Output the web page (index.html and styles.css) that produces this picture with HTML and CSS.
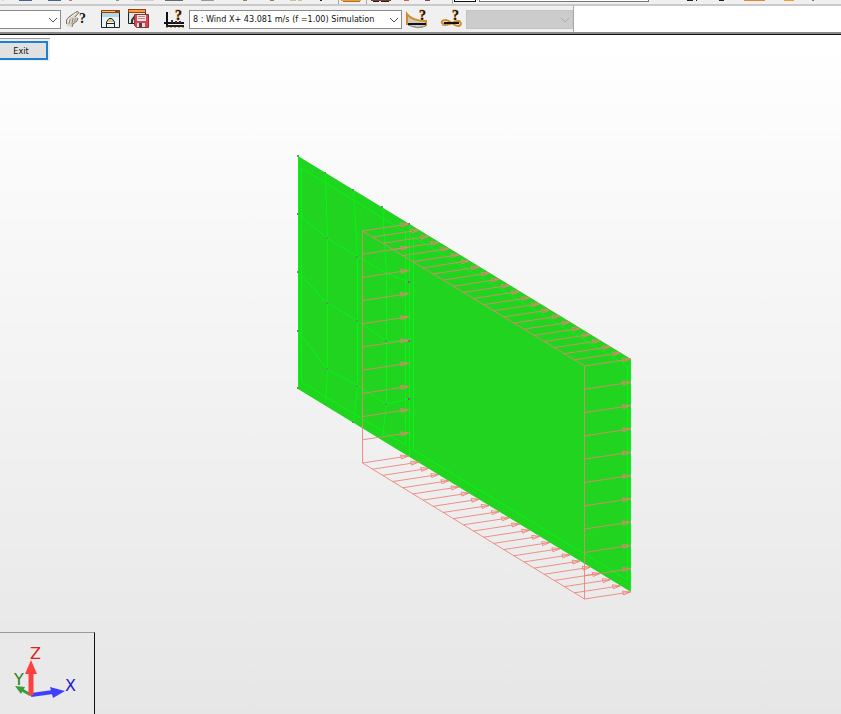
FILE: index.html
```html
<!DOCTYPE html>
<html lang="en">
<head>
    <meta charset="UTF-8">
    <meta name="viewport" content="width=device-width, initial-scale=1.0">
    <title>Wind load simulation</title>
    <link rel="stylesheet" href="styles.css">
</head>
<body>
    <!-- Lower edge of the upper toolbar -->
    <div class="top_strip">
        <svg width="841" height="4" viewBox="0 0 841 4" shape-rendering="crispEdges">
            <path fill="#f3c9cc" d="M2 0h2v1h-2z"/>
            <path fill="#456789" d="M19 0h13v1h-13zM48 0h13v1h-13z"/>
            <path fill="#b98088" d="M69 0h3v1h-3zM116 0h3v1h-3z"/>
            <path fill="#cfcfcf" d="M134 0h20v1h-20z"/>
            <path fill="#666b66" d="M165 0h18v1h-18z"/>
            <path fill="#9a9a9a" d="M201 0h13v1h-13z"/>
            <path fill="#a08050" d="M243 0h4v1h-4zM270 0h4v1h-4z"/>
            <path fill="#cfc58a" d="M290 0h6v1h-6zM298 0h4v1h-4z"/>
            <path fill="#222" d="M320 0h2v1h-2z"/>
            <path fill="#a9a9a9" d="M338 0h1v4h-1zM366 0h1v4h-1zM452 0h1v4h-1z"/>
            <path fill="#f0a030" d="M341 0h20v1h-20z"/>
            <path fill="#a87030" d="M343 1h17v1h-17z"/>
            <path fill="#803828" d="M371 0h20v1h-20z"/>
            <path fill="#222" d="M373 1h6v1h-6zM381 1h8v1h-8z"/>
            <path fill="#e85050" d="M404 0h5v1h-5z"/>
            <path fill="#8c4444" d="M425 0h5v1h-5z"/>
            <path fill="#fff" d="M455 0h20v1h-20zM480 0h168v2h-168z"/>
            <path fill="#111" d="M454 0h1v2h-1zM475 0h1v2h-1zM454 1h22v1h-22z"/>
            <path fill="#777" d="M479 0h1v2h-1zM648 0h1v2h-1zM479 1h170v1h-170z"/>
            <path fill="#222" d="M687 0h6v1h-6zM696 0h1v1h-1zM719 0h5v1h-5z"/>
            <path fill="#e08838" d="M744 0h21v1h-21z"/>
            <path fill="#ff9928" d="M784 0h10v1h-10z"/>
            <path fill="#777" d="M812 0h2v1h-2z"/>
        </svg>
    </div>

    <!-- Case toolbar -->
    <div class="toolbar">
        <span class="combo combo_small">
            <select aria-label="Selection"><option></option></select>
            <svg class="arrow" viewBox="0 0 10 6"><path d="M1 1l4 4 4-4"/></svg>
        </span>
        <button class="tool" aria-label="Pick query">
            <svg width="22" height="20" viewBox="0 0 22 20">
                <path fill="#d9d3c2" d="M2 17L1 12 3 8 8 4 12 2 14 3 10 8 13 8 12 12 8 15 7 18z"/>
                <path fill="none" stroke="#77736a" d="M1.500 15V11L4 8L12 2.500L14 3.500L10 8M13 9L12 12L8 15L7 18"/>
                <path fill="none" stroke="#8f8a80" d="M4 15L5 10M7 15L8 9M9 13L11 9"/>
                <path fill="none" stroke="#fff" d="M3 13L4 9M6 8L11 4"/>
                <text class="mark" x="14" y="14">?</text>
            </svg>
        </button>
        <i class="space"></i>
        <button class="tool" aria-label="Window">
            <svg width="22" height="20" viewBox="0 0 22 20">
                <path fill="#e9f4f8" stroke="#222" d="M2.500 2.500h18v16h-18z"/>
                <path fill="#8c4414" d="M2 1h19v3h-19z"/>
                <path fill="#ffb468" d="M3 2h13v1h-13z"/>
                <path fill="#b0d8e6" d="M3 4h17v4h-17z"/>
                <path fill="#e8bf75" d="M11.500 9l4 4h-8z"/>
                <path fill="none" stroke="#222" d="M7.500 18V13L10 9.500H13L15.500 13V18M7 14.500H16"/>
            </svg>
        </button>
        <button class="tool tool_wide" aria-label="Save view">
            <svg width="26" height="20" viewBox="0 0 26 20">
                <path fill="#d5e8ef" stroke="#222" d="M3.500 1.500h17v13h-17z"/>
                <path fill="#8c4414" d="M3 0h18v4h-18z"/>
                <path fill="#ff9d3c" d="M4 1h16v2h-16z"/>
                <path fill="none" stroke="#333" stroke-width="2" d="M7 14V11L10 7"/>
                <path fill="#d9434b" stroke="#943038" d="M9.500 5.500h14v13h-12l-2-2z"/>
                <path fill="#f4e9ea" d="M12 6h9v6h-9z"/>
                <path fill="#bd8588" d="M13 7h7v1h-7zM13 9h7v1h-7z"/>
                <path fill="#ddd" d="M12 14h8v4h-8z"/>
                <path fill="#444" d="M14 14h3v4h-3z"/>
            </svg>
        </button>
        <i class="space"></i>
        <button class="tool" aria-label="Load query">
            <svg width="22" height="20" viewBox="0 0 22 20">
                <path fill="none" stroke="#111" stroke-width="2" d="M4 3V17M1 14H21"/>
                <path fill="none" stroke="#222" stroke-width="2" d="M3 17H21"/>
                <path fill="none" stroke="#333" stroke-width="2" d="M9 14V11M13 14V12M17 14V12"/>
                <path fill="none" stroke="#d49a50" stroke-dasharray="2 2" d="M3 18.500H21"/>
                <text class="mark mark_glow" x="12" y="11">?</text>
            </svg>
        </button>
        <span class="combo combo_case">
            <select aria-label="Load case"><option>8 : Wind X+ 43.081 m/s (f =1.00) Simulation</option></select>
            <svg class="arrow" viewBox="0 0 10 6"><path d="M1 1l4 4 4-4"/></svg>
        </span>
        <button class="tool" aria-label="Diagram query">
            <svg width="22" height="20" viewBox="0 0 22 20">
                <path fill="#cfcac0" d="M1 5Q7 12 20 13L20 17Q10 19 2 15z"/>
                <path fill="none" stroke="#d08c28" stroke-width="2" d="M1 16V5Q6 12 20 12V17"/>
                <path fill="none" stroke="#888" d="M2 16Q12 20 20 17M5 17Q12 20 17 18"/>
                <path fill="none" stroke="#111" stroke-width="2" d="M2 15H20"/>
                <text class="mark mark_glow" x="13" y="11">?</text>
            </svg>
        </button>
        <i class="space"></i>
        <button class="tool" aria-label="Deformation query">
            <svg width="22" height="20" viewBox="0 0 22 20">
                <path fill="none" stroke="#888" d="M2 16C10 18 13 10 20 12"/>
                <path fill="none" stroke="#d08c28" stroke-width="2" d="M5 15C0 15 1 11 6 11C12 12 14 18 19 17C22 16 21 12 18 12C13 12 11 17 5 15"/>
                <path fill="none" stroke="#111" stroke-width="2" d="M4 14H19"/>
                <text class="mark mark_glow" x="12" y="11">?</text>
            </svg>
        </button>
        <span class="combo combo_off">
            <select aria-label="Component" disabled><option></option></select>
            <svg class="arrow" viewBox="0 0 10 6"><path d="M1 1l4 4 4-4"/></svg>
        </span>
        <div class="toolbar_rest"></div>
    </div>

    <!-- Model view -->
    <div class="view">
        <svg class="model" viewBox="0 35 841 679" preserveAspectRatio="xMidYMid meet">
            <polygon fill="#20d420" points="298,156 631,359 631,592 298,389"/>
            <g class="mesh">
                <path d="M298.500 157V388M409.500 224V457M630.500 360V591"/>
                <path d="M301.500 168V382L405.500 445V232Z"/>
                <path d="M413.500 237V450L627.500 580V366Z"/>
                <path d="M325.500 173L327.500 239V369L325.500 404"/>
                <path d="M353.500 190L357.500 257V386L353.500 423"/>
                <path d="M382.500 207L386.500 273V404L382.500 438"/>
                <path d="M298 214L327 238 358 257 386 273 409 282"/>
                <path d="M298 272L327 303 358 321 386 341 409 341"/>
                <path d="M298 331L327 369 358 386 386 404 409 399"/>
            </g>
            <g id="nodes"></g>
            <g id="loads" class="loads">
                <path d="M362.500 231L584.500 366V599L362.500 463Z"/>
            </g>
        </svg>

        <div class="exit_box">
            <button class="exit">Exit</button>
        </div>

        <!-- Axis triad -->
        <div class="axes">
            <svg width="93" height="81" viewBox="0 633 93 81">
                <path stroke="#3c9c3c" stroke-width="3" d="M31 695L22 690"/>
                <polygon fill="#3c9c3c" points="15,686 25,687 21,694"/>
                <path stroke="#4040ff" stroke-width="4" d="M31 695L53 692"/>
                <polygon fill="#4040ff" points="65,691 50,687 53,698"/>
                <path stroke="#ff4040" stroke-width="5" d="M31 695V672"/>
                <polygon fill="#ff4040" points="31,660 37,674 25,674"/>
                <text x="30" y="659" fill="#e02020">Z</text>
                <text x="14" y="685" fill="#208020">Y</text>
                <text x="65" y="691" fill="#2020d0">X</text>
            </svg>
        </div>
    </div>

    <script>
        const svgNS="http://www.w3.org/2000/svg";
        const loads=document.getElementById("loads");
        const nodes=document.getElementById("nodes");

        // one wind arrow starting on the pressure outline
        const drawArrow=(x,y)=>{
            const arrow=document.createElementNS(svgNS,"path");
            arrow.setAttribute("d","M0 0L46 -7M38 -8L46 -7L39 -4Z");
            arrow.setAttribute("transform",`translate(${x} ${y})`);
            loads.appendChild(arrow);
        }
        for(let i=0;i<=22;i++){
            drawArrow(362.5+i*222/22,231+i*135/22);
            drawArrow(362.5+i*222/22,463+i*136/22);
        }
        for(let i=1;i<10;i++){
            drawArrow(362.5,231+i*23.2);
            drawArrow(584.5,366+i*23.3);
        }

        // mesh nodes
        const points=[
            [298,156],[298,214],[298,272],[298,331],[298,388],
            [325,173],[327,238],[327,303],[327,369],[325,404],
            [353,190],[357,257],[357,321],[357,386],[353,422],
            [382,207],[386,341],[386,404],
            [409,224],[409,282],[409,341],[409,399]
        ];
        points.forEach(([x,y])=>{
            const node=document.createElementNS(svgNS,"rect");
            node.setAttribute("x",x-1);
            node.setAttribute("y",y-1);
            node.setAttribute("width",2);
            node.setAttribute("height",2);
            node.setAttribute("fill",x===409?"#b040b0":"#5a9a5a");
            nodes.appendChild(node);
        });
    </script>
</body>
</html>
```
FILE: styles.css
```css
*{
    margin: 0;
    padding: 0;
    box-sizing: border-box;
}
body{
    display: flex;
    flex-direction: column;
    height: 100vh;
    overflow: hidden;
    background-color: #f0f0f0;
    font-family: "DejaVu Sans Condensed", "Liberation Sans", sans-serif;
    font-size: 9px;
    color: #111;
}
.top_strip{
    height: 6px;
    flex: none;
    overflow: hidden;
    border-bottom: 2px solid #cacaca;
}
.top_strip svg{
    display: block;
}
.toolbar{
    display: flex;
    align-items: center;
    gap: 4px;
    flex: none;
    height: 29px;
    padding-bottom: 2px;
    border-bottom: 1px solid #111;
    box-shadow: inset 0 -2px #888;
}
.tool{
    flex: none;
    width: 22px;
    height: 20px;
    border: none;
    background: none;
}
.tool_wide{
    width: 26px;
}
.tool svg{
    display: block;
}
.mark{
    font-family: "Liberation Serif", serif;
    font-size: 14px;
    font-weight: bold;
    fill: #111;
}
.mark_glow{
    paint-order: stroke;
    stroke: #e0a860;
}
.space{
    flex: none;
    width: 4px;
}
.combo{
    position: relative;
    flex: none;
    height: 19px;
}
.combo select{
    appearance: none;
    display: block;
    width: 100%;
    height: 100%;
    padding: 0 16px 0 3px;
    border: 1px solid #8a8a8a;
    border-radius: 0;
    background-color: #fff;
    font: inherit;
    color: #111;
}
.combo_small{
    width: 61px;
}
.combo_small select{
    border-left: none;
}
.combo_case{
    width: 213px;
}
.combo_off{
    width: 107px;
}
.combo_off select{
    border-color: #c4c4c4;
    background-color: #ccc;
    opacity: 1;
}
.arrow{
    position: absolute;
    right: 3px;
    top: 7px;
    width: 10px;
    height: 6px;
    fill: none;
    stroke: #555;
    pointer-events: none;
}
.combo_off .arrow{
    stroke: #aaa;
}
.toolbar_rest{
    flex: 1;
    align-self: stretch;
    margin-left: -4px;
    border-left: 1px solid #aaa;
    background-color: #fff;
}
.view{
    position: relative;
    flex: 1;
    min-height: 0;
    background: linear-gradient(#fff, #e6e6e6);
}
.model{
    display: block;
    width: 100%;
    height: 100%;
}
.mesh{
    fill: none;
    stroke: #08f414;
}
.loads{
    fill: none;
    stroke: #ec8074;
    stroke-opacity: 0.85;
}
/* exit button lies over the model */
.exit_box{
    position: absolute;
    left: 0;
    top: 3px;
    width: 50px;
    padding: 2px 2px 1px 0;
    border-top: 1px solid #999;
    background-color: #eee;
}
.exit{
    display: block;
    width: 100%;
    height: 19px;
    padding-right: 4px;
    border: 2px solid #2080d0;
    border-left: none;
    background-color: #e1e1e1;
    font: inherit;
    color: #111;
}
.axes{
    position: absolute;
    left: 0;
    bottom: 0;
    width: 95px;
    border-top: 1px solid #999;
    border-right: 1px solid #111;
    background-color: #e9e9e9;
}
.axes svg{
    display: block;
}
.axes text{
    font-family: "DejaVu Sans", sans-serif;
    font-size: 16px;
}
```
